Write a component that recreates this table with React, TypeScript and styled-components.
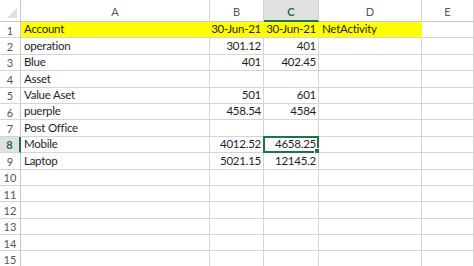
import React from "react";
import styled, { createGlobalStyle } from "styled-components";

const GlobalStyle = createGlobalStyle`
  html, body {
    margin: 0;
    padding: 0;
    background: #ffffff;
  }
  body {
    font-family: Lato, "Liberation Sans", sans-serif;
    overflow: hidden;
  }
`;

const GREEN = "#217346";
const GRID = "#d4d4d4";
const ROW_H = 16.4;

const Sheet = styled.div`
  display: grid;
  grid-template-columns: 21px 189px 54px 55px 103px 1fr;
  grid-template-rows: 22px repeat(15, ${ROW_H}px);
  width: 474px;
  height: 266px;
  overflow: hidden;
`;

const Corner = styled.div`
  position: relative;
  border-right: 1px solid #c6c6c6;
  border-bottom: 1px solid #c6c6c6;
  background: #ffffff;

  &::after {
    content: "";
    position: absolute;
    right: 3px;
    bottom: 3px;
    width: 0;
    height: 0;
    border-left: 10px solid transparent;
    border-bottom: 10px solid #dfdfdf;
  }
`;

const ColHead = styled.div<{ $active?: boolean }>`
  display: flex;
  align-items: center;
  justify-content: center;
  padding-top: 2px;
  box-sizing: border-box;
  font-size: 11px;
  color: ${(p) => (p.$active ? GREEN : "#555")};
  font-weight: ${(p) => (p.$active ? 700 : 400)};
  background: ${(p) => (p.$active ? "#e1e1e1" : "#fff")};
  border-right: 1px solid ${GRID};
  border-bottom: ${(p) => (p.$active ? `2px solid ${GREEN}` : "1px solid #c6c6c6")};
`;

const RowHead = styled.div<{ $active?: boolean }>`
  display: flex;
  align-items: center;
  justify-content: center;
  box-sizing: border-box;
  font-size: 11px;
  padding-top: 1px;
  color: ${(p) => (p.$active ? GREEN : "#555")};
  font-weight: ${(p) => (p.$active ? 700 : 400)};
  background: ${(p) => (p.$active ? "#e1e1e1" : "#fff")};
  border-right: ${(p) => (p.$active ? `2px solid ${GREEN}` : "1px solid #c6c6c6")};
  border-bottom: 1px solid ${GRID};
`;

const Cell = styled.div<{ $fill?: string; $right?: boolean }>`
  position: relative;
  display: flex;
  align-items: flex-end;
  justify-content: ${(p) => (p.$right ? "flex-end" : "flex-start")};
  box-sizing: border-box;
  padding: 0 2px 1px 3px;
  font-size: 11.5px;
  letter-spacing: -0.25px;
  line-height: 14px;
  color: #1e1e1e;
  white-space: nowrap;
  background: ${(p) => p.$fill || "#fff"};
  border-right: 1px solid ${(p) => (p.$fill ? p.$fill : GRID)};
  border-bottom: 1px solid ${GRID};
`;

const Selection = styled.div`
  position: absolute;
  left: -1px;
  top: -1px;
  right: -1px;
  bottom: -1px;
  border: 2px solid ${GREEN};
  pointer-events: none;

  &::after {
    content: "";
    position: absolute;
    right: -4px;
    bottom: -4px;
    width: 5px;
    height: 5px;
    background: ${GREEN};
    border: 1px solid #fff;
  }
`;

type Row = [string, string, string, string];

const rows: Row[] = [
  ["Account", "30-Jun-21", "30-Jun-21", "NetActivity"],
  ["operation", "301.12", "401", ""],
  ["Blue", "401", "402.45", ""],
  ["Asset", "", "", ""],
  ["Value Aset", "501", "601", ""],
  ["puerple", "458.54", "4584", ""],
  ["Post Office", "", "", ""],
  ["Mobile", "4012.52", "4658.25", ""],
  ["Laptop", "5021.15", "12145.2", ""],
];

const cols = ["A", "B", "C", "D", "E"];

export default function App() {
  return (
    <>
      <GlobalStyle />
      <Sheet>
        <Corner />
        {cols.map((c) => (
          <ColHead key={c} $active={c === "C"}>
            {c}
          </ColHead>
        ))}
        {Array.from({ length: 15 }, (_, i) => {
          const r = rows[i] || ["", "", "", ""];
          const fill = i === 0 ? "#ffff00" : undefined;
          return (
            <React.Fragment key={i}>
              <RowHead $active={i === 7}>{i + 1}</RowHead>
              <Cell $fill={fill}>{r[0]}</Cell>
              <Cell $fill={fill} $right>{r[1]}</Cell>
              <Cell $fill={fill} $right>
                {r[2]}
                {i === 7 && <Selection />}
              </Cell>
              <Cell $fill={fill}>{r[3]}</Cell>
              <Cell />
            </React.Fragment>
          );
        })}
      </Sheet>
    </>
  );
}
